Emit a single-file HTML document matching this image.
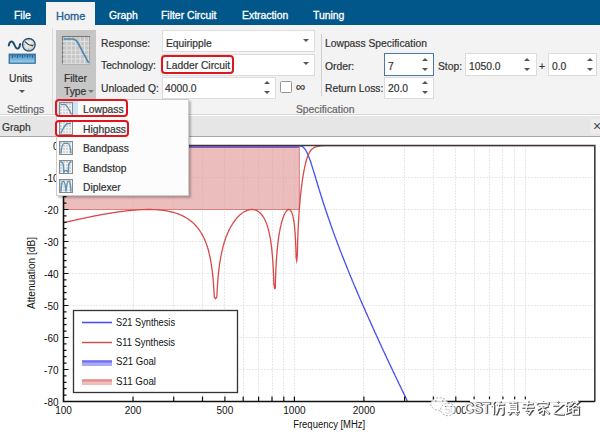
<!DOCTYPE html>
<html><head><meta charset="utf-8">
<style>
*{margin:0;padding:0;box-sizing:border-box}
html,body{width:600px;height:435px;overflow:hidden;background:#fff}
body{position:relative;font-family:"Liberation Sans",sans-serif;color:#3f3f3f}
.a{position:absolute;white-space:nowrap;line-height:14px}
.t{font-size:10.4px;color:#fff;-webkit-text-stroke:0.3px currentColor}
.r{font-size:10.3px;color:#333;-webkit-text-stroke:0.2px currentColor}
.box{position:absolute;background:#fff;border:1px solid #dcdcdc}
.redbox{position:absolute;border:2px solid #e3141c;border-radius:4px}
.arr{position:absolute;width:0;height:0;border-left:3px solid transparent;border-right:3px solid transparent;border-top:3px solid #555}
.sp{position:absolute;width:0;height:0;border-left:3px solid transparent;border-right:3px solid transparent}
.up{border-bottom:3px solid #555}
.dn{border-top:3px solid #555}
</style></head><body>
<!-- tab bar -->
<div style="position:absolute;left:0;top:0;width:600px;height:25px;background:#02578a"></div>
<div style="position:absolute;left:46px;top:2px;width:49px;height:24px;background:#f3f3f3"></div>
<div class="a t" style="left:14px;top:9px;">File</div>
<div class="a t" style="left:56px;top:9px;color:#1f5f96;font-size:11px">Home</div>
<div class="a t" style="left:109px;top:9px;">Graph</div>
<div class="a t" style="left:161px;top:9px;">Filter Circuit</div>
<div class="a t" style="left:242px;top:9px;">Extraction</div>
<div class="a t" style="left:313px;top:9px;">Tuning</div>

<!-- ribbon -->
<div style="position:absolute;left:0;top:25px;width:600px;height:90px;background:#f3f3f3;border-bottom:1px solid #d6d6d6"></div>
<div style="position:absolute;left:52px;top:28px;width:1px;height:86px;background:#dcdcdc"></div>
<div style="position:absolute;left:321px;top:34px;width:1px;height:62px;background:#d0d0d0"></div>

<!-- graph bar -->
<div style="position:absolute;left:0;top:116px;width:600px;height:21px;background:#e6e6e6;border-bottom:1px solid #a9a9a9"></div>
<div class="a r" style="left:2px;top:121px;color:#333">Graph</div>
<div style="position:absolute;left:590px;top:119px;width:10px;height:15px;background:#ececec"></div><div class="a" style="left:593px;top:119px;font-size:14px;color:#444">&#215;</div>

<!-- CHART -->
<svg style="position:absolute;left:0;top:137px" width="600" height="298" viewBox="0 137 600 298" font-family="Liberation Sans, sans-serif">
<path d="M133.5,145.5 V401.5 M173.5,145.5 V401.5 M202.5,145.5 V401.5 M224.5,145.5 V401.5 M243.5,145.5 V401.5 M258.5,145.5 V401.5 M272.5,145.5 V401.5 M283.5,145.5 V401.5 M294.5,145.5 V401.5 M363.5,145.5 V401.5 M404.5,145.5 V401.5 M433.5,145.5 V401.5 M455.5,145.5 V401.5 M474.5,145.5 V401.5 M489.5,145.5 V401.5 M502.5,145.5 V401.5 M514.5,145.5 V401.5 M525.5,145.5 V401.5 M63.5,177.5 H594.8 M63.5,209.5 H594.8 M63.5,241.5 H594.8 M63.5,273.5 H594.8 M63.5,305.5 H594.8 M63.5,337.5 H594.8 M63.5,369.5 H594.8" stroke="#d2d2d2" stroke-width="1" stroke-dasharray="1 2" fill="none"/>
<defs><clipPath id="pc"><rect x="63.5" y="145.5" width="531.3" height="256.0"/></clipPath></defs><g clip-path="url(#pc)">
<path d="M63.5,145.6 L64.2,145.6 L64.8,145.6 L65.5,145.6 L66.2,145.6 L66.8,145.6 L67.5,145.6 L68.2,145.6 L68.8,145.6 L69.5,145.6 L70.1,145.6 L70.8,145.6 L71.5,145.6 L72.1,145.6 L72.8,145.6 L73.5,145.6 L74.1,145.6 L74.8,145.6 L75.5,145.6 L76.1,145.6 L76.8,145.6 L77.5,145.6 L78.1,145.6 L78.8,145.6 L79.4,145.6 L80.1,145.6 L80.8,145.6 L81.4,145.6 L82.1,145.6 L82.8,145.6 L83.4,145.6 L84.1,145.6 L84.8,145.6 L85.4,145.6 L86.1,145.6 L86.8,145.6 L87.4,145.6 L88.1,145.6 L88.7,145.6 L89.4,145.6 L90.1,145.6 L90.7,145.6 L91.4,145.6 L92.1,145.6 L92.7,145.6 L93.4,145.6 L94.1,145.6 L94.7,145.6 L95.4,145.6 L96.1,145.6 L96.7,145.6 L97.4,145.6 L98.0,145.6 L98.7,145.6 L99.4,145.6 L100.0,145.6 L100.7,145.6 L101.4,145.6 L102.0,145.6 L102.7,145.6 L103.4,145.6 L104.0,145.6 L104.7,145.6 L105.4,145.6 L106.0,145.6 L106.7,145.6 L107.3,145.6 L108.0,145.6 L108.7,145.6 L109.3,145.6 L110.0,145.6 L110.7,145.6 L111.3,145.6 L112.0,145.6 L112.7,145.6 L113.3,145.6 L114.0,145.6 L114.7,145.6 L115.3,145.6 L116.0,145.6 L116.6,145.6 L117.3,145.6 L118.0,145.6 L118.6,145.6 L119.3,145.6 L120.0,145.6 L120.6,145.6 L121.3,145.6 L122.0,145.6 L122.6,145.6 L123.3,145.6 L124.0,145.6 L124.6,145.6 L125.3,145.6 L125.9,145.6 L126.6,145.6 L127.3,145.6 L127.9,145.6 L128.6,145.6 L129.3,145.6 L129.9,145.6 L130.6,145.6 L131.3,145.6 L131.9,145.6 L132.6,145.6 L133.3,145.6 L133.9,145.6 L134.6,145.6 L135.2,145.6 L135.9,145.6 L136.6,145.6 L137.2,145.6 L137.9,145.6 L138.6,145.6 L139.2,145.6 L139.9,145.6 L140.6,145.6 L141.2,145.6 L141.9,145.6 L142.6,145.6 L143.2,145.6 L143.9,145.6 L144.5,145.6 L145.2,145.6 L145.9,145.6 L146.5,145.6 L147.2,145.6 L147.9,145.6 L148.5,145.6 L149.2,145.6 L149.9,145.6 L150.5,145.6 L151.2,145.6 L151.9,145.6 L152.5,145.6 L153.2,145.6 L153.8,145.6 L154.5,145.6 L155.2,145.6 L155.8,145.6 L156.5,145.6 L157.2,145.6 L157.8,145.6 L158.5,145.6 L159.2,145.6 L159.8,145.6 L160.5,145.6 L161.2,145.6 L161.8,145.6 L162.5,145.6 L163.1,145.6 L163.8,145.6 L164.5,145.6 L165.1,145.6 L165.8,145.6 L166.5,145.6 L167.1,145.6 L167.8,145.6 L168.5,145.6 L169.1,145.6 L169.8,145.6 L170.5,145.6 L171.1,145.6 L171.8,145.6 L172.4,145.6 L173.1,145.6 L173.8,145.6 L174.4,145.6 L175.1,145.6 L175.8,145.6 L176.4,145.6 L177.1,145.6 L177.8,145.6 L178.4,145.6 L179.1,145.6 L179.8,145.6 L180.4,145.6 L181.1,145.6 L181.7,145.6 L182.4,145.6 L183.1,145.6 L183.7,145.6 L184.4,145.6 L185.1,145.6 L185.7,145.6 L186.4,145.6 L187.1,145.6 L187.7,145.6 L188.4,145.6 L189.1,145.6 L189.7,145.6 L190.4,145.6 L191.0,145.6 L191.7,145.6 L192.4,145.6 L193.0,145.6 L193.7,145.6 L194.4,145.5 L195.0,145.5 L195.7,145.5 L196.4,145.5 L197.0,145.5 L197.7,145.5 L198.4,145.5 L199.0,145.5 L199.7,145.5 L200.3,145.5 L201.0,145.5 L201.7,145.5 L202.3,145.5 L203.0,145.5 L203.7,145.5 L204.3,145.5 L205.0,145.5 L205.7,145.5 L206.3,145.5 L207.0,145.5 L207.7,145.5 L208.3,145.5 L209.0,145.5 L209.6,145.5 L210.3,145.5 L211.0,145.5 L211.6,145.5 L212.3,145.5 L213.0,145.5 L213.6,145.5 L214.3,145.5 L215.0,145.5 L215.6,145.5 L216.3,145.5 L217.0,145.5 L217.6,145.5 L218.3,145.5 L218.9,145.5 L219.6,145.5 L220.3,145.5 L220.9,145.5 L221.6,145.5 L222.3,145.5 L222.9,145.5 L223.6,145.5 L224.3,145.5 L224.9,145.5 L225.6,145.5 L226.3,145.5 L226.9,145.5 L227.6,145.5 L228.2,145.5 L228.9,145.5 L229.6,145.5 L230.2,145.5 L230.9,145.5 L231.6,145.5 L232.2,145.5 L232.9,145.6 L233.6,145.6 L234.2,145.6 L234.9,145.6 L235.6,145.6 L236.2,145.6 L236.9,145.6 L237.5,145.6 L238.2,145.6 L238.9,145.6 L239.5,145.6 L240.2,145.6 L240.9,145.6 L241.5,145.6 L242.2,145.6 L242.9,145.6 L243.5,145.6 L244.2,145.6 L244.9,145.6 L245.5,145.6 L246.2,145.6 L246.8,145.6 L247.5,145.6 L248.2,145.6 L248.8,145.6 L249.5,145.6 L250.2,145.6 L250.8,145.6 L251.5,145.6 L252.2,145.6 L252.8,145.6 L253.5,145.6 L254.2,145.6 L254.8,145.6 L255.5,145.6 L256.1,145.6 L256.8,145.6 L257.5,145.6 L258.1,145.6 L258.8,145.6 L259.5,145.6 L260.1,145.6 L260.8,145.6 L261.5,145.6 L262.1,145.6 L262.8,145.6 L263.5,145.6 L264.1,145.6 L264.8,145.6 L265.4,145.6 L266.1,145.6 L266.8,145.5 L267.4,145.5 L268.1,145.5 L268.8,145.5 L269.4,145.5 L270.1,145.5 L270.8,145.5 L271.4,145.5 L272.1,145.5 L272.8,145.5 L273.4,145.5 L274.1,145.5 L274.7,145.5 L275.4,145.5 L276.1,145.5 L276.7,145.5 L277.4,145.5 L278.1,145.5 L278.7,145.5 L279.4,145.5 L280.1,145.5 L280.7,145.5 L281.4,145.6 L282.1,145.6 L282.7,145.6 L283.4,145.6 L284.0,145.6 L284.7,145.6 L285.4,145.6 L286.0,145.6 L286.7,145.6 L287.4,145.6 L288.0,145.6 L288.7,145.6 L289.4,145.6 L290.0,145.6 L290.7,145.6 L291.4,145.6 L292.0,145.6 L292.7,145.6 L293.3,145.6 L294.0,145.6 L294.7,145.5 L295.3,145.5 L296.0,145.5 L296.7,145.5 L297.3,145.5 L298.0,145.5 L298.7,145.6 L299.3,145.6 L299.9,145.7 L300.4,145.8 L300.9,146.0 L301.5,146.2 L302.0,146.5 L302.4,146.7 L302.8,146.9 L303.2,147.2 L303.6,147.6 L304.0,148.0 L304.4,148.4 L304.8,148.9 L305.0,149.2 L305.3,149.6 L305.6,150.0 L305.8,150.4 L306.1,150.9 L306.4,151.3 L306.6,151.8 L306.9,152.3 L307.2,152.9 L307.4,153.5 L307.7,154.0 L308.0,154.7 L308.2,155.3 L308.5,155.9 L308.8,156.6 L309.0,157.3 L309.3,158.0 L309.6,158.7 L309.8,159.5 L310.1,160.2 L310.4,161.0 L310.6,161.8 L310.9,162.6 L311.2,163.4 L311.4,164.2 L311.7,165.0 L311.9,165.9 L312.2,166.7 L312.5,167.6 L312.7,168.4 L313.0,169.3 L313.3,170.1 L313.5,171.0 L313.8,171.9 L314.1,172.7 L314.3,173.6 L314.6,174.5 L314.9,175.4 L315.1,176.3 L315.4,177.1 L315.7,178.0 L315.9,178.9 L316.2,179.8 L316.5,180.7 L316.7,181.6 L317.0,182.4 L317.3,183.3 L317.5,184.2 L317.8,185.1 L318.1,185.9 L318.3,186.8 L318.6,187.7 L318.9,188.5 L319.1,189.4 L319.4,190.3 L319.7,191.1 L319.9,192.0 L320.2,192.8 L320.5,193.7 L320.7,194.5 L321.0,195.4 L321.2,196.2 L321.5,197.1 L321.8,197.9 L322.0,198.8 L322.3,199.6 L322.6,200.4 L322.8,201.2 L323.1,202.1 L323.4,202.9 L323.6,203.7 L323.9,204.5 L324.2,205.3 L324.4,206.2 L324.7,207.0 L325.0,207.8 L325.2,208.6 L325.5,209.4 L325.8,210.2 L326.0,211.0 L326.3,211.8 L326.6,212.6 L326.8,213.3 L327.1,214.1 L327.4,214.9 L327.6,215.7 L327.9,216.5 L328.2,217.3 L328.4,218.0 L328.7,218.8 L329.0,219.6 L329.2,220.3 L329.5,221.1 L329.8,221.9 L330.0,222.6 L330.3,223.4 L330.5,224.1 L330.8,224.9 L331.1,225.6 L331.3,226.4 L331.6,227.1 L331.9,227.9 L332.1,228.6 L332.4,229.4 L332.7,230.1 L332.9,230.8 L333.2,231.6 L333.5,232.3 L333.7,233.0 L334.0,233.8 L334.3,234.5 L334.5,235.2 L334.8,235.9 L335.1,236.7 L335.3,237.4 L335.6,238.1 L335.9,238.8 L336.1,239.5 L336.4,240.2 L336.7,241.0 L336.9,241.7 L337.2,242.4 L337.5,243.1 L337.7,243.8 L338.0,244.5 L338.3,245.2 L338.5,245.9 L338.8,246.6 L339.1,247.3 L339.3,248.0 L339.6,248.7 L339.8,249.4 L340.1,250.1 L340.4,250.7 L340.6,251.4 L340.9,252.1 L341.2,252.8 L341.4,253.5 L341.7,254.2 L342.0,254.9 L342.2,255.5 L342.5,256.2 L342.8,256.9 L343.0,257.6 L343.3,258.2 L343.6,258.9 L343.8,259.6 L344.1,260.3 L344.4,260.9 L344.6,261.6 L344.9,262.3 L345.2,262.9 L345.4,263.6 L345.7,264.3 L346.0,264.9 L346.2,265.6 L346.5,266.2 L346.8,266.9 L347.0,267.6 L347.3,268.2 L347.6,268.9 L347.8,269.5 L348.1,270.2 L348.4,270.8 L348.6,271.5 L348.9,272.1 L349.1,272.8 L349.4,273.4 L349.7,274.1 L349.9,274.7 L350.2,275.4 L350.5,276.0 L350.7,276.7 L351.0,277.3 L351.3,278.0 L351.5,278.6 L351.8,279.2 L352.1,279.9 L352.3,280.5 L352.6,281.2 L352.9,281.8 L353.1,282.4 L353.4,283.1 L353.7,283.7 L353.9,284.3 L354.2,285.0 L354.5,285.6 L354.7,286.2 L355.0,286.9 L355.3,287.5 L355.5,288.1 L355.8,288.7 L356.1,289.4 L356.3,290.0 L356.6,290.6 L356.9,291.2 L357.1,291.9 L357.4,292.5 L357.7,293.1 L357.9,293.7 L358.2,294.4 L358.4,295.0 L358.7,295.6 L359.0,296.2 L359.2,296.8 L359.5,297.4 L359.8,298.1 L360.0,298.7 L360.3,299.3 L360.6,299.9 L360.8,300.5 L361.1,301.1 L361.4,301.7 L361.6,302.4 L361.9,303.0 L362.2,303.6 L362.4,304.2 L362.7,304.8 L363.0,305.4 L363.2,306.0 L363.5,306.6 L363.8,307.2 L364.0,307.8 L364.3,308.4 L364.6,309.0 L364.8,309.6 L365.1,310.2 L365.4,310.8 L365.6,311.5 L365.9,312.1 L366.2,312.7 L366.4,313.3 L366.7,313.9 L367.0,314.5 L367.2,315.1 L367.5,315.7 L367.7,316.2 L368.0,316.8 L368.3,317.4 L368.5,318.0 L368.8,318.6 L369.1,319.2 L369.3,319.8 L369.6,320.4 L369.9,321.0 L370.1,321.6 L370.4,322.2 L370.7,322.8 L370.9,323.4 L371.2,324.0 L371.5,324.6 L371.7,325.2 L372.0,325.7 L372.3,326.3 L372.5,326.9 L372.8,327.5 L373.1,328.1 L373.3,328.7 L373.6,329.3 L373.9,329.9 L374.1,330.4 L374.4,331.0 L374.7,331.6 L374.9,332.2 L375.2,332.8 L375.5,333.4 L375.7,333.9 L376.0,334.5 L376.3,335.1 L376.5,335.7 L376.8,336.3 L377.1,336.9 L377.3,337.4 L377.6,338.0 L377.8,338.6 L378.1,339.2 L378.4,339.8 L378.6,340.3 L378.9,340.9 L379.2,341.5 L379.4,342.1 L379.7,342.6 L380.0,343.2 L380.2,343.8 L380.5,344.4 L380.8,344.9 L381.0,345.5 L381.3,346.1 L381.6,346.7 L381.8,347.2 L382.1,347.8 L382.4,348.4 L382.6,349.0 L382.9,349.5 L383.2,350.1 L383.4,350.7 L383.7,351.3 L384.0,351.8 L384.2,352.4 L384.5,353.0 L384.8,353.5 L385.0,354.1 L385.3,354.7 L385.6,355.2 L385.8,355.8 L386.1,356.4 L386.4,356.9 L386.6,357.5 L386.9,358.1 L387.1,358.7 L387.4,359.2 L387.7,359.8 L387.9,360.4 L388.2,360.9 L388.5,361.5 L388.7,362.0 L389.0,362.6 L389.3,363.2 L389.5,363.7 L389.8,364.3 L390.1,364.9 L390.3,365.4 L390.6,366.0 L390.9,366.6 L391.1,367.1 L391.4,367.7 L391.7,368.2 L391.9,368.8 L392.2,369.4 L392.5,369.9 L392.7,370.5 L393.0,371.1 L393.3,371.6 L393.5,372.2 L393.8,372.7 L394.1,373.3 L394.3,373.9 L394.6,374.4 L394.9,375.0 L395.1,375.5 L395.4,376.1 L395.7,376.6 L395.9,377.2 L396.2,377.8 L396.4,378.3 L396.7,378.9 L397.0,379.4 L397.2,380.0 L397.5,380.5 L397.8,381.1 L398.0,381.7 L398.3,382.2 L398.6,382.8 L398.8,383.3 L399.1,383.9 L399.4,384.4 L399.6,385.0 L399.9,385.5 L400.2,386.1 L400.4,386.7 L400.7,387.2 L401.0,387.8 L401.2,388.3 L401.5,388.9 L401.8,389.4 L402.0,390.0 L402.3,390.5 L402.6,391.1 L402.8,391.6 L403.1,392.2 L403.4,392.7 L403.6,393.3 L403.9,393.8 L404.2,394.4 L404.4,394.9 L404.7,395.5 L405.0,396.0 L405.2,396.6 L405.5,397.1 L405.7,397.7 L406.0,398.2 L406.3,398.8 L406.5,399.3 L406.8,399.9 L407.1,400.4 L407.3,401.0 L407.6,401.5 L407.9,402.1 L408.1,402.6 L408.4,401.5" stroke="#4a50ee" stroke-width="1.35" fill="none" stroke-linejoin="round"/>
<rect x="63.5" y="145.5" width="235.8" height="64.0" fill="#e29898" fill-opacity="0.64" stroke="#d88080" stroke-width="1"/>
<path d="M63.5,147.0 H299.3" stroke="#8a5ad0" stroke-width="2" fill="none"/>
<path d="M63.5,222.7 L64.0,222.6 L64.6,222.5 L65.1,222.4 L65.6,222.2 L66.2,222.1 L66.7,222.0 L67.2,221.9 L67.8,221.7 L68.3,221.6 L68.8,221.5 L69.3,221.4 L69.9,221.3 L70.4,221.1 L70.9,221.0 L71.5,220.9 L72.0,220.8 L72.5,220.7 L73.1,220.5 L73.6,220.4 L74.1,220.3 L74.7,220.2 L75.2,220.1 L75.7,219.9 L76.3,219.8 L76.8,219.7 L77.3,219.6 L77.8,219.5 L78.4,219.4 L78.9,219.2 L79.4,219.1 L80.0,219.0 L80.5,218.9 L81.0,218.8 L81.6,218.7 L82.1,218.6 L82.6,218.4 L83.2,218.3 L83.7,218.2 L84.2,218.1 L84.8,218.0 L85.3,217.9 L85.8,217.8 L86.4,217.7 L86.9,217.5 L87.4,217.4 L87.9,217.3 L88.5,217.2 L89.0,217.1 L89.5,217.0 L90.1,216.9 L90.6,216.8 L91.1,216.7 L91.7,216.6 L92.2,216.5 L92.7,216.4 L93.3,216.2 L93.8,216.1 L94.3,216.0 L94.9,215.9 L95.4,215.8 L95.9,215.7 L96.4,215.6 L97.0,215.5 L97.5,215.4 L98.0,215.3 L98.6,215.2 L99.1,215.1 L99.6,215.0 L100.2,214.9 L100.7,214.8 L101.2,214.7 L101.8,214.6 L102.3,214.5 L102.8,214.4 L103.4,214.3 L103.9,214.2 L104.4,214.2 L105.0,214.1 L105.5,214.0 L106.0,213.9 L106.5,213.8 L107.1,213.7 L107.6,213.6 L108.1,213.5 L108.7,213.4 L109.2,213.3 L109.7,213.2 L110.3,213.2 L110.8,213.1 L111.3,213.0 L111.9,212.9 L112.4,212.8 L112.9,212.7 L113.5,212.6 L114.0,212.6 L114.5,212.5 L115.0,212.4 L115.6,212.3 L116.1,212.2 L116.6,212.2 L117.2,212.1 L117.7,212.0 L118.2,211.9 L118.8,211.9 L119.3,211.8 L119.8,211.7 L120.4,211.6 L120.9,211.6 L121.4,211.5 L122.0,211.4 L122.6,211.4 L123.3,211.3 L124.0,211.2 L124.6,211.1 L125.3,211.0 L125.9,210.9 L126.6,210.9 L127.3,210.8 L127.9,210.7 L128.6,210.7 L129.3,210.6 L129.9,210.5 L130.6,210.5 L131.3,210.4 L131.9,210.3 L132.6,210.3 L133.3,210.2 L133.9,210.2 L134.6,210.1 L135.2,210.0 L135.9,210.0 L136.6,209.9 L137.2,209.9 L137.9,209.9 L138.6,209.8 L139.2,209.8 L139.9,209.7 L140.6,209.7 L141.2,209.7 L141.9,209.6 L142.6,209.6 L143.2,209.6 L143.9,209.6 L144.5,209.6 L145.2,209.5 L145.9,209.5 L146.5,209.5 L147.2,209.5 L147.9,209.5 L148.5,209.5 L149.2,209.5 L149.9,209.5 L150.5,209.5 L151.2,209.5 L151.9,209.5 L152.5,209.6 L153.2,209.6 L153.8,209.6 L154.5,209.6 L155.2,209.7 L155.8,209.7 L156.5,209.7 L157.2,209.8 L157.8,209.8 L158.5,209.9 L159.2,209.9 L159.8,210.0 L160.5,210.1 L161.2,210.1 L161.8,210.2 L162.5,210.3 L163.1,210.4 L163.7,210.4 L164.2,210.5 L164.7,210.6 L165.3,210.7 L165.8,210.8 L166.3,210.9 L166.9,210.9 L167.4,211.0 L167.9,211.1 L168.5,211.2 L169.0,211.4 L169.5,211.5 L170.1,211.6 L170.6,211.7 L171.1,211.8 L171.6,212.0 L172.2,212.1 L172.7,212.2 L173.2,212.4 L173.8,212.5 L174.3,212.7 L174.8,212.8 L175.4,213.0 L175.9,213.2 L176.4,213.3 L177.0,213.5 L177.5,213.7 L178.0,213.9 L178.6,214.1 L179.1,214.3 L179.6,214.5 L180.2,214.7 L180.7,215.0 L181.2,215.2 L181.7,215.4 L182.3,215.7 L182.8,215.9 L183.3,216.2 L183.7,216.4 L184.1,216.6 L184.5,216.8 L184.9,217.1 L185.3,217.3 L185.7,217.5 L186.1,217.7 L186.5,218.0 L186.9,218.2 L187.3,218.5 L187.7,218.7 L188.1,219.0 L188.5,219.3 L188.9,219.6 L189.3,219.8 L189.7,220.1 L190.1,220.4 L190.5,220.7 L190.9,221.1 L191.3,221.4 L191.7,221.7 L192.1,222.0 L192.5,222.4 L192.9,222.7 L193.3,223.1 L193.7,223.5 L194.1,223.9 L194.5,224.3 L194.9,224.7 L195.3,225.1 L195.7,225.5 L196.1,226.0 L196.5,226.4 L196.9,226.9 L197.3,227.4 L197.7,227.9 L198.0,228.2 L198.2,228.5 L198.5,228.9 L198.8,229.2 L199.0,229.6 L199.3,230.0 L199.5,230.4 L199.8,230.7 L200.1,231.1 L200.3,231.5 L200.6,232.0 L200.9,232.4 L201.1,232.8 L201.4,233.3 L201.7,233.7 L201.9,234.2 L202.2,234.6 L202.5,235.1 L202.7,235.6 L203.0,236.1 L203.3,236.7 L203.5,237.2 L203.8,237.8 L204.1,238.3 L204.3,238.9 L204.6,239.5 L204.9,240.1 L205.1,240.7 L205.4,241.4 L205.7,242.1 L205.9,242.7 L206.2,243.5 L206.5,244.2 L206.7,244.9 L207.0,245.7 L207.3,246.5 L207.5,247.4 L207.8,248.3 L208.1,249.2 L208.3,250.1 L208.5,250.6 L208.6,251.1 L208.7,251.6 L208.8,252.1 L209.0,252.6 L209.1,253.2 L209.2,253.7 L209.4,254.3 L209.5,254.8 L209.6,255.4 L209.8,256.0 L209.9,256.6 L210.0,257.3 L210.2,257.9 L210.3,258.6 L210.4,259.3 L210.6,260.0 L210.7,260.7 L210.8,261.4 L211.0,262.2 L211.1,263.0 L211.2,263.8 L211.4,264.6 L211.5,265.5 L211.6,266.4 L211.8,267.3 L211.9,268.3 L212.0,269.3 L212.2,270.3 L212.3,271.4 L212.4,272.6 L212.6,273.7 L212.7,275.0 L212.8,276.3 L213.0,277.6 L213.1,279.1 L213.2,280.6 L213.4,282.2 L213.5,283.9 L213.6,285.7 L213.8,287.7 L213.9,289.8 L214.0,292.1 L214.2,294.6 L214.3,297.3 L215.6,298.8 L216.8,297.1 L217.0,294.3 L217.1,291.7 L217.2,289.4 L217.4,287.2 L217.5,285.2 L217.6,283.3 L217.8,281.5 L217.9,279.9 L218.0,278.3 L218.1,276.8 L218.3,275.4 L218.4,274.1 L218.5,272.8 L218.7,271.6 L218.8,270.4 L218.9,269.3 L219.1,268.2 L219.2,267.1 L219.3,266.1 L219.5,265.1 L219.6,264.2 L219.7,263.3 L219.9,262.4 L220.0,261.5 L220.1,260.7 L220.3,259.9 L220.4,259.1 L220.5,258.3 L220.7,257.6 L220.8,256.9 L220.9,256.1 L221.1,255.4 L221.2,254.8 L221.3,254.1 L221.5,253.5 L221.6,252.8 L221.7,252.2 L221.9,251.6 L222.0,251.0 L222.1,250.4 L222.3,249.9 L222.4,249.3 L222.5,248.8 L222.7,248.2 L222.8,247.7 L222.9,247.2 L223.1,246.7 L223.2,246.2 L223.3,245.7 L223.5,245.2 L223.6,244.7 L223.9,243.8 L224.1,242.9 L224.4,242.0 L224.7,241.2 L224.9,240.4 L225.2,239.6 L225.5,238.8 L225.7,238.1 L226.0,237.3 L226.3,236.6 L226.5,235.9 L226.8,235.3 L227.1,234.6 L227.3,234.0 L227.6,233.3 L227.8,232.7 L228.1,232.1 L228.4,231.5 L228.6,231.0 L228.9,230.4 L229.2,229.9 L229.4,229.3 L229.7,228.8 L230.0,228.3 L230.2,227.8 L230.5,227.3 L230.8,226.8 L231.0,226.4 L231.3,225.9 L231.6,225.4 L231.8,225.0 L232.1,224.6 L232.4,224.1 L232.6,223.7 L232.9,223.3 L233.2,222.9 L233.4,222.5 L233.7,222.1 L234.0,221.8 L234.2,221.4 L234.5,221.0 L234.8,220.7 L235.0,220.3 L235.3,220.0 L235.6,219.6 L236.0,219.1 L236.4,218.7 L236.7,218.2 L237.1,217.7 L237.5,217.3 L237.9,216.9 L238.3,216.5 L238.7,216.1 L239.1,215.7 L239.5,215.3 L239.9,214.9 L240.3,214.6 L240.7,214.3 L241.1,213.9 L241.5,213.6 L241.9,213.3 L242.3,213.0 L242.7,212.8 L243.1,212.5 L243.5,212.2 L243.9,212.0 L244.3,211.7 L244.7,211.5 L245.1,211.3 L245.7,211.0 L246.2,210.8 L246.7,210.6 L247.2,210.4 L247.8,210.2 L248.3,210.0 L248.8,209.9 L249.4,209.8 L249.9,209.7 L250.4,209.6 L251.1,209.5 L251.8,209.5 L252.4,209.5 L253.1,209.6 L253.8,209.6 L254.3,209.7 L254.8,209.9 L255.4,210.0 L255.9,210.2 L256.4,210.4 L256.9,210.7 L257.3,210.9 L257.7,211.1 L258.1,211.4 L258.5,211.6 L258.9,211.9 L259.3,212.3 L259.7,212.6 L260.1,213.0 L260.5,213.3 L260.9,213.8 L261.3,214.2 L261.7,214.7 L262.0,215.0 L262.3,215.4 L262.5,215.7 L262.8,216.1 L263.1,216.5 L263.3,216.9 L263.6,217.4 L263.9,217.8 L264.1,218.3 L264.4,218.8 L264.7,219.3 L264.9,219.8 L265.2,220.4 L265.4,221.0 L265.7,221.6 L266.0,222.2 L266.2,222.9 L266.5,223.6 L266.8,224.3 L267.0,225.0 L267.3,225.8 L267.6,226.7 L267.8,227.6 L268.1,228.5 L268.2,229.0 L268.4,229.5 L268.5,230.0 L268.6,230.5 L268.8,231.0 L268.9,231.6 L269.0,232.2 L269.2,232.7 L269.3,233.3 L269.4,234.0 L269.6,234.6 L269.7,235.3 L269.8,235.9 L270.0,236.6 L270.1,237.4 L270.2,238.1 L270.4,238.9 L270.5,239.7 L270.6,240.5 L270.8,241.4 L270.9,242.3 L271.0,243.2 L271.2,244.2 L271.3,245.2 L271.4,246.3 L271.6,247.4 L271.7,248.6 L271.8,249.8 L272.0,251.1 L272.1,252.4 L272.2,253.9 L272.4,255.4 L272.5,257.0 L272.6,258.8 L272.8,260.6 L272.9,262.6 L273.0,264.8 L273.2,267.1 L273.3,269.7 L273.4,272.6 L273.6,275.8 L273.7,279.5 L273.8,283.7 L274.6,288.5 L275.3,288.1 L275.4,283.0 L275.5,278.7 L275.7,275.0 L275.8,271.7 L275.9,268.7 L276.1,266.0 L276.2,263.6 L276.3,261.3 L276.5,259.2 L276.6,257.3 L276.7,255.5 L276.9,253.8 L277.0,252.1 L277.1,250.6 L277.3,249.2 L277.4,247.8 L277.5,246.5 L277.7,245.2 L277.8,244.0 L277.9,242.9 L278.1,241.8 L278.2,240.7 L278.3,239.7 L278.5,238.7 L278.6,237.8 L278.7,236.8 L278.9,236.0 L279.0,235.1 L279.1,234.3 L279.3,233.5 L279.4,232.7 L279.5,231.9 L279.7,231.2 L279.8,230.5 L279.9,229.8 L280.1,229.1 L280.2,228.5 L280.3,227.8 L280.5,227.2 L280.6,226.6 L280.7,226.0 L280.9,225.4 L281.0,224.9 L281.1,224.3 L281.3,223.8 L281.4,223.3 L281.5,222.8 L281.7,222.3 L281.8,221.8 L281.9,221.3 L282.2,220.4 L282.5,219.5 L282.7,218.7 L283.0,217.9 L283.3,217.2 L283.5,216.5 L283.8,215.8 L284.0,215.2 L284.3,214.6 L284.6,214.0 L284.8,213.5 L285.1,213.0 L285.4,212.5 L285.6,212.1 L285.9,211.7 L286.2,211.3 L286.4,211.0 L286.8,210.6 L287.2,210.2 L287.6,209.9 L288.0,209.7 L288.6,209.5 L289.2,209.5 L289.8,209.8 L290.2,210.0 L290.6,210.5 L290.8,210.8 L291.1,211.2 L291.4,211.7 L291.6,212.2 L291.9,212.9 L292.2,213.6 L292.4,214.4 L292.7,215.3 L292.8,215.8 L292.9,216.4 L293.1,217.0 L293.2,217.6 L293.3,218.2 L293.5,219.0 L293.6,219.7 L293.7,220.5 L293.9,221.4 L294.0,222.3 L294.1,223.3 L294.3,224.3 L294.4,225.5 L294.5,226.7 L294.7,228.0 L294.8,229.5 L294.9,231.1 L295.1,232.8 L295.2,234.7 L295.3,236.8 L295.5,239.2 L295.6,241.9 L295.7,245.0 L295.9,248.5 L296.0,252.7 L296.1,257.8 L296.7,260.7 L297.3,255.4 L297.5,249.4 L297.6,244.3 L297.7,240.0 L297.9,236.1 L298.0,232.6 L298.1,229.5 L298.3,226.6 L298.4,223.9 L298.5,221.4 L298.7,219.0 L298.8,216.8 L298.9,214.7 L299.1,212.7 L299.2,210.8 L299.3,209.0 L299.5,207.3 L299.6,205.7 L299.7,204.1 L299.9,202.5 L300.0,201.0 L300.1,199.6 L300.3,198.2 L300.4,196.9 L300.5,195.5 L300.7,194.3 L300.8,193.0 L300.9,191.8 L301.1,190.7 L301.2,189.5 L301.3,188.4 L301.5,187.3 L301.6,186.3 L301.7,185.2 L301.9,184.2 L302.0,183.2 L302.1,182.3 L302.2,181.3 L302.4,180.4 L302.5,179.5 L302.6,178.6 L302.8,177.8 L302.9,176.9 L303.0,176.1 L303.2,175.3 L303.3,174.5 L303.4,173.7 L303.6,173.0 L303.7,172.2 L303.8,171.5 L304.0,170.8 L304.1,170.1 L304.2,169.4 L304.4,168.7 L304.5,168.1 L304.6,167.4 L304.8,166.8 L304.9,166.2 L305.0,165.6 L305.2,165.0 L305.3,164.5 L305.4,163.9 L305.6,163.4 L305.7,162.8 L305.8,162.3 L306.0,161.8 L306.1,161.3 L306.2,160.8 L306.4,160.4 L306.6,159.5 L306.9,158.6 L307.2,157.8 L307.4,157.0 L307.7,156.3 L308.0,155.6 L308.2,155.0 L308.5,154.4 L308.8,153.8 L309.0,153.3 L309.3,152.8 L309.6,152.3 L309.8,151.8 L310.1,151.4 L310.4,151.0 L310.6,150.7 L310.9,150.3 L311.3,149.8 L311.7,149.4 L312.1,149.0 L312.5,148.7 L312.9,148.4 L313.3,148.1 L313.7,147.8 L314.1,147.6 L314.5,147.4 L315.0,147.2 L315.5,147.0 L316.1,146.8 L316.6,146.6 L317.1,146.5 L317.7,146.4 L318.2,146.3 L318.7,146.2 L319.3,146.1 L319.8,146.0 L320.5,145.9 L321.1,145.9 L321.8,145.8 L322.4,145.8 L323.1,145.7 L323.8,145.7 L324.4,145.7 L325.1,145.7 L325.8,145.6 L326.4,145.6 L327.1,145.6 L327.8,145.6 L328.4,145.6 L329.1,145.6 L329.8,145.6 L330.4,145.5 L331.1,145.5 L331.7,145.5 L332.4,145.5 L333.1,145.5 L333.7,145.5 L334.4,145.5 L335.1,145.5 L335.7,145.5 L336.4,145.5 L337.1,145.5 L337.7,145.5 L338.4,145.5 L339.1,145.5 L339.7,145.5 L340.4,145.5 L341.0,145.5 L341.7,145.5 L342.4,145.5 L343.0,145.5 L343.7,145.5 L344.4,145.5 L345.0,145.5 L345.7,145.5 L346.4,145.5 L347.0,145.5 L347.7,145.5 L348.4,145.5 L349.0,145.5 L349.7,145.5 L350.3,145.5 L351.0,145.5 L351.7,145.5 L352.3,145.5 L353.0,145.5 L353.7,145.5 L354.3,145.5 L355.0,145.5 L355.7,145.5 L356.3,145.5 L357.0,145.5 L357.7,145.5 L358.3,145.5 L359.0,145.5 L359.6,145.5 L360.3,145.5 L361.0,145.5 L361.6,145.5 L362.3,145.5 L363.0,145.5 L363.6,145.5 L364.3,145.5 L365.0,145.5 L365.6,145.5 L366.3,145.5 L367.0,145.5 L367.6,145.5 L368.3,145.5 L368.9,145.5 L369.6,145.5 L370.3,145.5 L370.9,145.5 L371.6,145.5 L372.3,145.5 L372.9,145.5 L373.6,145.5 L374.3,145.5 L374.9,145.5 L375.6,145.5 L376.3,145.5 L376.9,145.5 L377.6,145.5 L378.2,145.5 L378.9,145.5 L379.6,145.5 L380.2,145.5 L380.9,145.5 L381.6,145.5 L382.2,145.5 L382.9,145.5 L383.6,145.5 L384.2,145.5 L384.9,145.5 L385.6,145.5 L386.2,145.5 L386.9,145.5 L387.5,145.5 L388.2,145.5 L388.9,145.5 L389.5,145.5 L390.2,145.5 L390.9,145.5 L391.5,145.5 L392.2,145.5 L392.9,145.5 L393.5,145.5 L394.2,145.5 L394.9,145.5 L395.5,145.5 L396.2,145.5 L396.8,145.5 L397.5,145.5 L398.2,145.5 L398.8,145.5 L399.5,145.5 L400.2,145.5 L400.8,145.5 L401.5,145.5 L402.2,145.5 L402.8,145.5 L403.5,145.5 L404.2,145.5 L404.8,145.5 L405.5,145.5 L406.1,145.5 L406.8,145.5 L407.5,145.5 L408.1,145.5 L408.8,145.5 L409.5,145.5 L410.1,145.5 L410.8,145.5 L411.5,145.5 L412.1,145.5 L412.8,145.5 L413.5,145.5 L414.1,145.5 L414.8,145.5 L415.4,145.5 L416.1,145.5 L416.8,145.5 L417.4,145.5 L418.1,145.5 L418.8,145.5 L419.4,145.5 L420.1,145.5 L420.8,145.5 L421.4,145.5 L422.1,145.5 L422.8,145.5 L423.4,145.5 L424.1,145.5 L424.7,145.5 L425.4,145.5 L426.1,145.5 L426.7,145.5 L427.4,145.5 L428.1,145.5 L428.7,145.5 L429.4,145.5 L430.1,145.5 L430.7,145.5 L431.4,145.5 L432.1,145.5 L432.7,145.5 L433.4,145.5 L434.0,145.5 L434.7,145.5 L435.4,145.5 L436.0,145.5 L436.7,145.5 L437.4,145.5 L438.0,145.5 L438.7,145.5 L439.4,145.5 L440.0,145.5 L440.7,145.5 L441.4,145.5 L442.0,145.5 L442.7,145.5 L443.3,145.5 L444.0,145.5 L444.7,145.5 L445.3,145.5 L446.0,145.5 L446.7,145.5 L447.3,145.5 L448.0,145.5 L448.7,145.5 L449.3,145.5 L450.0,145.5 L450.7,145.5 L451.3,145.5 L452.0,145.5 L452.6,145.5 L453.3,145.5 L454.0,145.5 L454.6,145.5 L455.3,145.5 L456.0,145.5 L456.6,145.5 L457.3,145.5 L458.0,145.5 L458.6,145.5 L459.3,145.5 L460.0,145.5 L460.6,145.5 L461.3,145.5 L461.9,145.5 L462.6,145.5 L463.3,145.5 L463.9,145.5 L464.6,145.5 L465.3,145.5 L465.9,145.5 L466.6,145.5 L467.3,145.5 L467.9,145.5 L468.6,145.5 L469.3,145.5 L469.9,145.5 L470.6,145.5 L471.2,145.5 L471.9,145.5 L472.6,145.5 L473.2,145.5 L473.9,145.5 L474.6,145.5 L475.2,145.5 L475.9,145.5 L476.6,145.5 L477.2,145.5 L477.9,145.5 L478.6,145.5 L479.2,145.5 L479.9,145.5 L480.5,145.5 L481.2,145.5 L481.9,145.5 L482.5,145.5 L483.2,145.5 L483.9,145.5 L484.5,145.5 L485.2,145.5 L485.9,145.5 L486.5,145.5 L487.2,145.5 L487.9,145.5 L488.5,145.5 L489.2,145.5 L489.8,145.5 L490.5,145.5 L491.2,145.5 L491.8,145.5 L492.5,145.5 L493.2,145.5 L493.8,145.5 L494.5,145.5 L495.2,145.5 L495.8,145.5 L496.5,145.5 L497.2,145.5 L497.8,145.5 L498.5,145.5 L499.1,145.5 L499.8,145.5 L500.5,145.5 L501.1,145.5 L501.8,145.5 L502.5,145.5 L503.1,145.5 L503.8,145.5 L504.5,145.5 L505.1,145.5 L505.8,145.5 L506.5,145.5 L507.1,145.5 L507.8,145.5 L508.4,145.5 L509.1,145.5 L509.8,145.5 L510.4,145.5 L511.1,145.5 L511.8,145.5 L512.4,145.5 L513.1,145.5 L513.8,145.5 L514.4,145.5 L515.1,145.5 L515.8,145.5 L516.4,145.5 L517.1,145.5 L517.7,145.5 L518.4,145.5 L519.1,145.5 L519.7,145.5 L520.4,145.5 L521.1,145.5 L521.7,145.5 L522.4,145.5 L523.1,145.5 L523.7,145.5 L524.4,145.5 L525.1,145.5 L525.7,145.5 L526.4,145.5 L527.0,145.5 L527.7,145.5 L528.4,145.5 L529.0,145.5 L529.7,145.5 L530.4,145.5 L531.0,145.5 L531.7,145.5 L532.4,145.5 L533.0,145.5 L533.7,145.5 L534.4,145.5 L535.0,145.5 L535.7,145.5 L536.3,145.5 L537.0,145.5 L537.7,145.5 L538.3,145.5 L539.0,145.5 L539.7,145.5 L540.3,145.5 L541.0,145.5 L541.7,145.5 L542.3,145.5 L543.0,145.5 L543.7,145.5 L544.3,145.5 L545.0,145.5 L545.6,145.5 L546.3,145.5 L547.0,145.5 L547.6,145.5 L548.3,145.5 L549.0,145.5 L549.6,145.5 L550.3,145.5 L551.0,145.5 L551.6,145.5 L552.3,145.5 L553.0,145.5 L553.6,145.5 L554.3,145.5 L554.9,145.5 L555.6,145.5 L556.3,145.5 L556.9,145.5 L557.6,145.5 L558.3,145.5 L558.9,145.5 L559.6,145.5 L560.3,145.5 L560.9,145.5 L561.6,145.5 L562.3,145.5 L562.9,145.5 L563.6,145.5 L564.2,145.5 L564.9,145.5 L565.6,145.5 L566.2,145.5 L566.9,145.5 L567.6,145.5 L568.2,145.5 L568.9,145.5 L569.6,145.5 L570.2,145.5 L570.9,145.5 L571.6,145.5 L572.2,145.5 L572.9,145.5 L573.6,145.5 L574.2,145.5 L574.9,145.5 L575.5,145.5 L576.2,145.5 L576.9,145.5 L577.5,145.5 L578.2,145.5 L578.9,145.5 L579.5,145.5 L580.2,145.5 L580.9,145.5 L581.5,145.5 L582.2,145.5 L582.9,145.5 L583.5,145.5 L584.2,145.5 L584.8,145.5 L585.5,145.5 L586.2,145.5 L586.8,145.5 L587.5,145.5 L588.2,145.5 L588.8,145.5 L589.5,145.5 L590.2,145.5 L590.8,145.5 L591.5,145.5 L592.2,145.5 L592.8,145.5 L593.5,145.5 L594.1,145.5 L594.8,145.5" stroke="#d84848" stroke-width="1.3" fill="none" stroke-linejoin="miter" stroke-miterlimit="10"/>
</g>
<path d="M63.5,145.5 H594.8 V401.5" stroke="#3a3a3a" stroke-width="1.6" fill="none"/>
<path d="M63.5,145.5 V401.5 H594.8" stroke="#111" stroke-width="1.6" fill="none"/>
<path d="M63.5,145.5 h5 M63.5,151.9 h3 M63.5,158.3 h3 M63.5,164.7 h3 M63.5,171.1 h3 M63.5,177.5 h5 M63.5,183.9 h3 M63.5,190.3 h3 M63.5,196.7 h3 M63.5,203.1 h3 M63.5,209.5 h5 M63.5,215.9 h3 M63.5,222.3 h3 M63.5,228.7 h3 M63.5,235.1 h3 M63.5,241.5 h5 M63.5,247.9 h3 M63.5,254.3 h3 M63.5,260.7 h3 M63.5,267.1 h3 M63.5,273.5 h5 M63.5,279.9 h3 M63.5,286.3 h3 M63.5,292.7 h3 M63.5,299.1 h3 M63.5,305.5 h5 M63.5,311.9 h3 M63.5,318.3 h3 M63.5,324.7 h3 M63.5,331.1 h3 M63.5,337.5 h5 M63.5,343.9 h3 M63.5,350.3 h3 M63.5,356.7 h3 M63.5,363.1 h3 M63.5,369.5 h5 M63.5,375.9 h3 M63.5,382.3 h3 M63.5,388.7 h3 M63.5,395.1 h3 M63.5,401.5 h5 M133.0,401.5 v-5 M173.7,401.5 v-5 M202.5,401.5 v-5 M224.9,401.5 v-5 M243.2,401.5 v-5 M258.6,401.5 v-5 M272.0,401.5 v-5 M283.8,401.5 v-5 M294.4,401.5 v-5 M363.9,401.5 v-5 M404.6,401.5 v-5 M433.4,401.5 v-5 M455.8,401.5 v-5 M474.1,401.5 v-5 M489.5,401.5 v-5 M502.9,401.5 v-5 M514.7,401.5 v-5 M525.3,401.5 v-5" stroke="#111" stroke-width="1.2" fill="none"/>
<text x="58.5" y="149.8" font-size="10" text-anchor="end" fill="#111">0</text>
<text x="58.5" y="181.8" font-size="10" text-anchor="end" fill="#111">-10</text>
<text x="58.5" y="213.8" font-size="10" text-anchor="end" fill="#111">-20</text>
<text x="58.5" y="245.8" font-size="10" text-anchor="end" fill="#111">-30</text>
<text x="58.5" y="277.8" font-size="10" text-anchor="end" fill="#111">-40</text>
<text x="58.5" y="309.8" font-size="10" text-anchor="end" fill="#111">-50</text>
<text x="58.5" y="341.8" font-size="10" text-anchor="end" fill="#111">-60</text>
<text x="58.5" y="373.8" font-size="10" text-anchor="end" fill="#111">-70</text>
<text x="58.5" y="405.8" font-size="10" text-anchor="end" fill="#111">-80</text>
<text x="63.5" y="414" font-size="10" text-anchor="middle" fill="#111">100</text>
<text x="133.0" y="414" font-size="10" text-anchor="middle" fill="#111">200</text>
<text x="224.9" y="414" font-size="10" text-anchor="middle" fill="#111">500</text>
<text x="294.4" y="414" font-size="10" text-anchor="middle" fill="#111">1000</text>
<text x="363.9" y="414" font-size="10" text-anchor="middle" fill="#111">2000</text>
<text x="455.8" y="414" font-size="10" text-anchor="middle" fill="#111">5000</text>
<text x="329.2" y="428" font-size="10" text-anchor="middle" fill="#111" textLength="72" lengthAdjust="spacingAndGlyphs">Frequency [MHz]</text>
<text x="0" y="0" font-size="10" text-anchor="middle" fill="#111" textLength="72" lengthAdjust="spacingAndGlyphs" transform="translate(35,273) rotate(-90)">Attenuation [dB]</text>
<rect x="73.5" y="310.5" width="164" height="82" fill="#fff" stroke="#333" stroke-width="1.3"/>
<path d="M82,322.5 h30" stroke="#4a50ee" stroke-width="1.6"/>
<path d="M82,342.5 h30" stroke="#d84848" stroke-width="1.4"/>
<rect x="82" y="360" width="30" height="6" fill="#a8aaf6"/><path d="M82,361.5 h30" stroke="#6a70f0" stroke-width="2"/>
<rect x="82" y="379" width="30" height="6" fill="#f0bcbc"/><path d="M82,380.5 h30" stroke="#e08a8a" stroke-width="2"/>
<text x="116" y="326.0" font-size="10.5" fill="#111" textLength="59" lengthAdjust="spacingAndGlyphs">S21 Synthesis</text>
<text x="116" y="345.7" font-size="10.5" fill="#111" textLength="59" lengthAdjust="spacingAndGlyphs">S11 Synthesis</text>
<text x="116" y="365.4" font-size="10.5" fill="#111" textLength="40" lengthAdjust="spacingAndGlyphs">S21 Goal</text>
<text x="116" y="385.1" font-size="10.5" fill="#111" textLength="40" lengthAdjust="spacingAndGlyphs">S11 Goal</text>
<g>
<rect x="470" y="399.3" width="108" height="3.2" fill="#fff"/>
<ellipse cx="439.2" cy="404" rx="8.5" ry="6.3" fill="#fff" fill-opacity="0.85" stroke="#9a9a9a" stroke-width="0.8" stroke-dasharray="2 1.5"/>
<ellipse cx="448" cy="409.5" rx="7.4" ry="6.2" fill="#fff" fill-opacity="0.8" stroke="#9a9a9a" stroke-width="0.8" stroke-dasharray="2 1.5"/>
<path d="M435,401 h1.5 M442,401 h1.5 M445,406.5 h1.3 M450.5,406.5 h1.3" stroke="#777" stroke-width="1"/>
<text x="464" y="412.5" font-size="14.5" fill="#4a4a4a" stroke="#4a4a4a" stroke-width="1.5" textLength="26" lengthAdjust="spacingAndGlyphs" transform="translate(0.8,0.8)">CST</text>
<text x="464" y="412.5" font-size="14.5" fill="#ffffff" stroke="#fff" stroke-width="0.3" textLength="26" lengthAdjust="spacingAndGlyphs">CST</text>
<g transform="translate(490.5,400)"><path d="M4,1 L1,6.5 M3,4.5 V14.5 M9,0.8 L10,2.5 M5.5,4 H14 M8,4 Q8,11 5,14.5 M8,7.5 H12.5 V13 Q12.5,14.5 10.5,14" fill="none" stroke="#4a4a4a" stroke-width="2.1" transform="translate(0.8,0.8)"/><path d="M4,1 L1,6.5 M3,4.5 V14.5 M9,0.8 L10,2.5 M5.5,4 H14 M8,4 Q8,11 5,14.5 M8,7.5 H12.5 V13 Q12.5,14.5 10.5,14" fill="none" stroke="#ffffff" stroke-width="1.3"/></g>
<g transform="translate(505.5,400)"><path d="M3,2 H12 M7.5,0.3 V4.5 M4,4.5 H11 V10.2 H4 Z M4,6.5 H11 M4,8.3 H11 M1.5,11.5 H13.5 M5.5,12.5 L3,14.5 M9.5,12.5 L12,14.5" fill="none" stroke="#4a4a4a" stroke-width="2.1" transform="translate(0.8,0.8)"/><path d="M3,2 H12 M7.5,0.3 V4.5 M4,4.5 H11 V10.2 H4 Z M4,6.5 H11 M4,8.3 H11 M1.5,11.5 H13.5 M5.5,12.5 L3,14.5 M9.5,12.5 L12,14.5" fill="none" stroke="#ffffff" stroke-width="1.3"/></g>
<g transform="translate(520.5,400)"><path d="M2,3.5 H12.5 M1,7 H13.5 M7.5,0.5 L5.5,10.2 H11 L7.5,14.5 M6,11.8 L9.5,14" fill="none" stroke="#4a4a4a" stroke-width="2.1" transform="translate(0.8,0.8)"/><path d="M2,3.5 H12.5 M1,7 H13.5 M7.5,0.5 L5.5,10.2 H11 L7.5,14.5 M6,11.8 L9.5,14" fill="none" stroke="#ffffff" stroke-width="1.3"/></g>
<g transform="translate(535.5,400)"><path d="M7,0.3 V2 M1.5,4.5 V2.5 H12.5 V4.5 M3,5.5 H11 M7.5,5.5 Q4,8.5 1.5,9.5 M6,7 Q9,8.5 7.5,14 L5.5,13.5 M7.5,9.5 L2.5,12.5 M8.5,9 L13.5,13.5 M8,7.5 L12.5,5.8" fill="none" stroke="#4a4a4a" stroke-width="2.1" transform="translate(0.8,0.8)"/><path d="M7,0.3 V2 M1.5,4.5 V2.5 H12.5 V4.5 M3,5.5 H11 M7.5,5.5 Q4,8.5 1.5,9.5 M6,7 Q9,8.5 7.5,14 L5.5,13.5 M7.5,9.5 L2.5,12.5 M8.5,9 L13.5,13.5 M8,7.5 L12.5,5.8" fill="none" stroke="#ffffff" stroke-width="1.3"/></g>
<g transform="translate(550.5,400)"><path d="M6,0.5 L8,2.3 M2,5 H11.5 L3,12.5 M3,12.5 Q6,14.2 13.5,14" fill="none" stroke="#4a4a4a" stroke-width="2.1" transform="translate(0.8,0.8)"/><path d="M6,0.5 L8,2.3 M2,5 H11.5 L3,12.5 M3,12.5 Q6,14.2 13.5,14" fill="none" stroke="#ffffff" stroke-width="1.3"/></g>
<g transform="translate(565.5,400)"><path d="M1,1.5 H5.5 V5.2 H1 Z M3.2,5.2 V12.5 M3.2,8.5 H5.5 M1,7 V13 L5.8,11.5 M8.5,0.5 L6.5,4.2 M8,2.2 H12.5 L7,7.2 M9,4.5 L13.8,7.2 M7.5,8.8 H12.8 V14 H7.5 Z" fill="none" stroke="#4a4a4a" stroke-width="2.1" transform="translate(0.8,0.8)"/><path d="M1,1.5 H5.5 V5.2 H1 Z M3.2,5.2 V12.5 M3.2,8.5 H5.5 M1,7 V13 L5.8,11.5 M8.5,0.5 L6.5,4.2 M8,2.2 H12.5 L7,7.2 M9,4.5 L13.8,7.2 M7.5,8.8 H12.8 V14 H7.5 Z" fill="none" stroke="#ffffff" stroke-width="1.3"/></g>
</g>
</svg>

<!-- Settings group -->
<svg style="position:absolute;left:6px;top:36px" width="32" height="30" viewBox="6 36 32 30">
<defs><linearGradient id="rul" x1="0" y1="0" x2="0" y2="1"><stop offset="0" stop-color="#3f86b8"/><stop offset="1" stop-color="#a6d6f2"/></linearGradient>
<radialGradient id="clk" cx="0.45" cy="0.4" r="0.6"><stop offset="0" stop-color="#ffffff"/><stop offset="1" stop-color="#c4c4c4"/></radialGradient></defs>
<path d="M8.8,45.5 C9.8,40.3 12.5,40 14.5,45 C16.5,50 19,50 20.2,44" stroke="#1c4c70" stroke-width="2" fill="none" stroke-linecap="round"/>
<circle cx="28.8" cy="44.8" r="6.3" fill="url(#clk)" stroke="#2a5878" stroke-width="1.4"/>
<path d="M28.8,44.8 L24.8,41.6 M28.8,44.8 L33,45.6" stroke="#333" stroke-width="1.1" fill="none"/>
<path d="M28.8,39.2 v1.3 M28.8,49.1 v1.3 M23.2,44.8 h1.3 M33.1,44.8 h1.3" stroke="#666" stroke-width="0.8"/>
<rect x="9.2" y="54.2" width="26" height="9" fill="url(#rul)" stroke="#2a6a96" stroke-width="1.2"/>
<path d="M12.5,55 v3 M15,55 v2 M17.5,55 v3 M20,55 v2 M22.5,55 v3 M25,55 v2 M27.5,55 v3 M30,55 v2 M32.5,55 v3" stroke="#1e5a86" stroke-width="0.8"/>
</svg>
<div class="a r" style="left:9px;top:72px">Units</div>
<div class="arr" style="left:19px;top:90px"></div>
<div class="a r" style="left:7px;top:103px;color:#666">Settings</div>

<div style="position:absolute;left:56px;top:30px;width:40px;height:70px;background:#c6c6c6"></div>
<svg style="position:absolute;left:60px;top:34px" width="32" height="32" viewBox="60 34 32 32">
<rect x="62.5" y="36.5" width="27" height="27.2" fill="#c6c6c6" stroke="#7a7a7a" stroke-width="1.1"/>
<path d="M66.9,37 V63.5 M71.3,37 V63.5 M75.7,37 V63.5 M80.1,37 V63.5 M84.5,37 V63.5 M88.9,37 V63.5 M62.5,41.4 H89.5 M62.5,45.8 H89.5 M62.5,50.2 H89.5 M62.5,54.6 H89.5 M62.5,59.0 H89.5 M62.5,63.4 H89.5" stroke="#e2e2e2" stroke-width="1" fill="none"/>
<path d="M64.5,39 H72.5 Q75.5,39 77.5,42 L88.3,62.3" stroke="#4d88ae" stroke-width="1.7" fill="none" stroke-linecap="round"/>
</svg>
<div class="a r" style="left:64px;top:72px">Filter</div>
<div class="a r" style="left:64px;top:85px">Type</div>
<div class="arr" style="left:88px;top:90px;border-top-color:#777"></div>

<!-- Specification labels -->
<div class="a r" style="left:101px;top:37px">Response:</div>
<div class="a r" style="left:101px;top:59px">Technology:</div>
<div class="a r" style="left:101px;top:82px">Unloaded Q:</div>

<div class="box" style="left:162px;top:30px;width:153px;height:22px"></div>
<div class="a r" style="left:166px;top:37px">Equiripple</div>
<div class="arr" style="left:303px;top:39px"></div>
<div class="box" style="left:162px;top:54px;width:153px;height:22px"></div>
<div class="a r" style="left:166px;top:59px">Ladder Circuit</div>
<div class="arr" style="left:303px;top:62px"></div>
<div class="box" style="left:162px;top:77px;width:114px;height:22px"></div>
<div class="a r" style="left:165px;top:82px">4000.0</div>
<div class="sp up" style="left:264px;top:81px"></div>
<div class="sp dn" style="left:264px;top:91px"></div>
<div style="position:absolute;left:280px;top:81px;width:12px;height:12px;background:#fff;border:1px solid #959595;border-radius:1.5px"></div>
<div class="a r" style="left:296px;top:80px;font-size:13px">&#8734;</div>
<div class="a r" style="left:296px;top:103px;color:#666">Specification</div>

<div class="a r" style="left:325px;top:37px">Lowpass Specification</div>
<div class="a r" style="left:325px;top:60px">Order:</div>
<div class="a r" style="left:325px;top:82px">Return Loss:</div>
<div class="box" style="left:384px;top:53px;width:50px;height:23px;border-color:#4a78a8"></div>
<div class="a r" style="left:388px;top:60px">7</div>
<div class="sp up" style="left:422px;top:58px"></div>
<div class="sp dn" style="left:422px;top:68px"></div>
<div class="box" style="left:384px;top:77px;width:50px;height:22px"></div>
<div class="a r" style="left:388px;top:82px">20.0</div>
<div class="sp up" style="left:422px;top:81px"></div>
<div class="sp dn" style="left:422px;top:91px"></div>

<div class="a r" style="left:438px;top:60px">Stop:</div>
<div class="box" style="left:465px;top:53px;width:72px;height:23px"></div>
<div class="a r" style="left:469px;top:60px">1050.0</div>
<div class="sp up" style="left:524px;top:58px"></div>
<div class="sp dn" style="left:524px;top:68px"></div>
<div class="a r" style="left:539px;top:60px">+</div>
<div class="box" style="left:548px;top:53px;width:49px;height:23px"></div>
<div class="a r" style="left:552px;top:60px">0.0</div>
<div class="sp up" style="left:587px;top:58px"></div>
<div class="sp dn" style="left:587px;top:68px"></div>

<!-- MENU -->
<div style="position:absolute;left:56px;top:99px;width:133px;height:97px;background:#fcfcfc;border:1px solid #cdcdcd;box-shadow:2px 2px 2px rgba(0,0,0,0.25)"></div>
<div style="position:absolute;left:57px;top:100px;width:21px;height:15px;background:#cce4f7"></div>
<svg style="position:absolute;left:59px;top:102px" width="14" height="14" viewBox="0 0 14 14"><rect x="0.6" y="0.6" width="12.8" height="12.8" fill="#d6d6d6" stroke="#8a8a8a" stroke-width="1.2"/><path d="M3.5,1.2 V12.8 M6.5,1.2 V12.8 M9.5,1.2 V12.8 M12.5,1.2 V12.8 M1.2,3.5 H12.8 M1.2,6.5 H12.8 M1.2,9.5 H12.8 M1.2,12.5 H12.8" stroke="#f2f2f2" stroke-width="1" fill="none"/><path d="M2,2.6 H6 Q8,3 12.5,12.5" stroke="#5a92bc" stroke-width="1.4" fill="none"/></svg>
<div class="a r" style="left:83px;top:103.0px;font-size:10.3px;color:#333">Lowpass</div>
<svg style="position:absolute;left:59px;top:121px" width="14" height="14" viewBox="0 0 14 14"><rect x="0.6" y="0.6" width="12.8" height="12.8" fill="#d6d6d6" stroke="#8a8a8a" stroke-width="1.2"/><path d="M3.5,1.2 V12.8 M6.5,1.2 V12.8 M9.5,1.2 V12.8 M12.5,1.2 V12.8 M1.2,3.5 H12.8 M1.2,6.5 H12.8 M1.2,9.5 H12.8 M1.2,12.5 H12.8" stroke="#f2f2f2" stroke-width="1" fill="none"/><path d="M1.8,12.5 Q5,5 8,2.6 H12" stroke="#5a92bc" stroke-width="1.4" fill="none"/></svg>
<div class="a r" style="left:83px;top:122.5px;font-size:10.3px;color:#333">Highpass</div>
<svg style="position:absolute;left:59px;top:141px" width="14" height="14" viewBox="0 0 14 14"><rect x="0.6" y="0.6" width="12.8" height="12.8" fill="#d6d6d6" stroke="#8a8a8a" stroke-width="1.2"/><path d="M3.5,1.2 V12.8 M6.5,1.2 V12.8 M9.5,1.2 V12.8 M12.5,1.2 V12.8 M1.2,3.5 H12.8 M1.2,6.5 H12.8 M1.2,9.5 H12.8 M1.2,12.5 H12.8" stroke="#f2f2f2" stroke-width="1" fill="none"/><path d="M2,12.5 C2.5,6 4,2.4 5.5,2.4 H8.5 C10,2.4 11.5,6 12,12.5" stroke="#5a92bc" stroke-width="1.4" fill="none"/></svg>
<div class="a r" style="left:83px;top:141.8px;font-size:10.3px;color:#333">Bandpass</div>
<svg style="position:absolute;left:59px;top:160px" width="14" height="14" viewBox="0 0 14 14"><rect x="0.6" y="0.6" width="12.8" height="12.8" fill="#d6d6d6" stroke="#8a8a8a" stroke-width="1.2"/><path d="M3.5,1.2 V12.8 M6.5,1.2 V12.8 M9.5,1.2 V12.8 M12.5,1.2 V12.8 M1.2,3.5 H12.8 M1.2,6.5 H12.8 M1.2,9.5 H12.8 M1.2,12.5 H12.8" stroke="#f2f2f2" stroke-width="1" fill="none"/><path d="M1.5,2 Q4,2 4.3,5 L4.8,12.3 Q7,8.5 9.2,12.3 L9.7,5 Q10,2 12.5,2" stroke="#5a92bc" stroke-width="1.4" fill="none"/></svg>
<div class="a r" style="left:83px;top:161.5px;font-size:10.3px;color:#333">Bandstop</div>
<svg style="position:absolute;left:59px;top:179px" width="14" height="14" viewBox="0 0 14 14"><rect x="0.6" y="0.6" width="12.8" height="12.8" fill="#d6d6d6" stroke="#8a8a8a" stroke-width="1.2"/><path d="M3.5,1.2 V12.8 M6.5,1.2 V12.8 M9.5,1.2 V12.8 M12.5,1.2 V12.8 M1.2,3.5 H12.8 M1.2,6.5 H12.8 M1.2,9.5 H12.8 M1.2,12.5 H12.8" stroke="#f2f2f2" stroke-width="1" fill="none"/><path d="M2,12.8 C2.5,4 3,2.2 4.2,2.2 C5.4,2.2 6.5,4 7,12.8 C7.5,4 8.6,2.2 9.8,2.2 C11,2.2 11.5,4 12,12.8" stroke="#5a92bc" stroke-width="1.4" fill="none"/></svg>
<div class="a r" style="left:83px;top:180.5px;font-size:10.3px;color:#333">Diplexer</div>
<div class="redbox" style="left:55px;top:99px;width:73px;height:17.5px"></div>
<div class="redbox" style="left:55px;top:119.5px;width:74px;height:17.5px"></div>
<div class="redbox" style="left:161px;top:55px;width:73px;height:19px"></div>

</body></html>
